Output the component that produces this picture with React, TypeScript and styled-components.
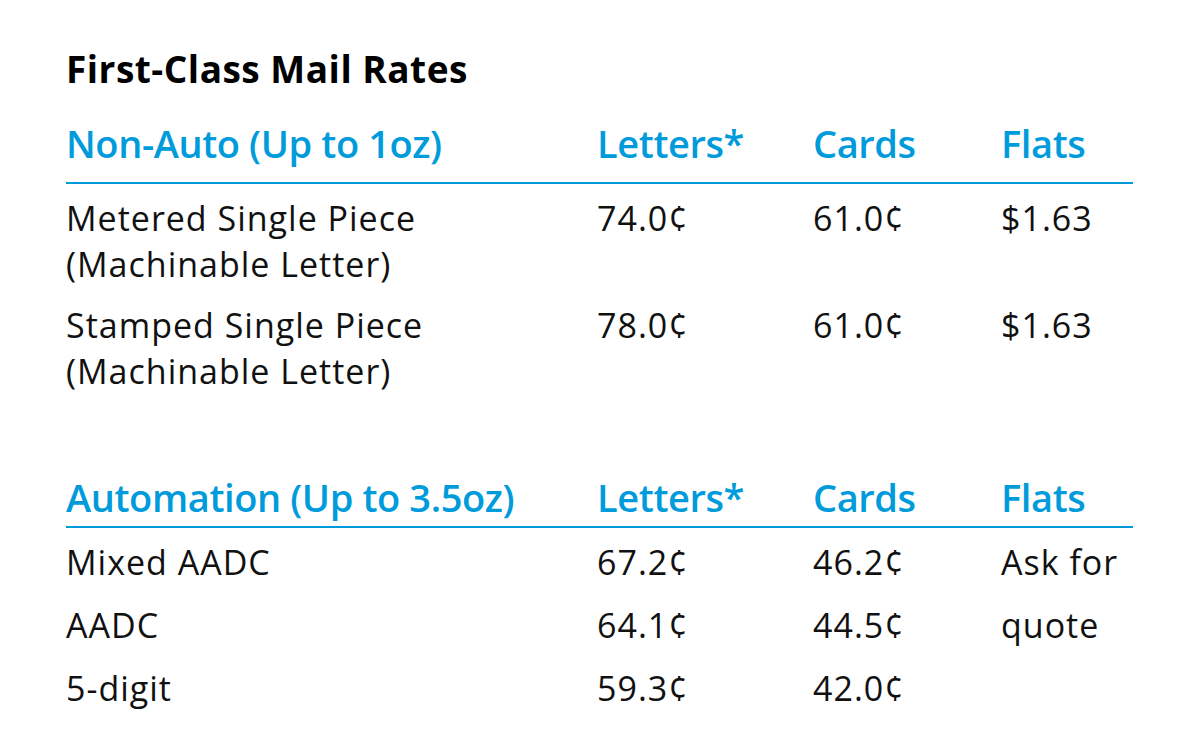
import React from "react";
import styled, { createGlobalStyle } from "styled-components";

const Global = createGlobalStyle`
  html, body { margin: 0; padding: 0; background: #ffffff; }
  body { font-family: "Open Sans", Lato, Arial, sans-serif; color: #111; }
`;

const BLUE = "#009bdb";

const Page = styled.div`
  padding: 48px 0 0 66px;
  width: 1067px;
`;

const Title = styled.h1`
  margin: 0 0 30px 0;
  font-size: 37px;
  line-height: 42px;
  font-weight: 700;
  letter-spacing: 0.5px;
  color: #000;
`;

const Table = styled.table<{ $gap?: number }>`
  width: 1067px;
  border-collapse: collapse;
  table-layout: fixed;
  margin-bottom: ${(p) => p.$gap ?? 0}px;
`;

const HeadCell = styled.th<{ $pad: number }>`
  text-align: left;
  font-size: 38px;
  line-height: 46px;
  font-weight: 600;
  letter-spacing: -0.4px;
  color: ${BLUE};
  padding: 0 0 ${(p) => p.$pad}px 0;
  border-bottom: 2px solid ${BLUE};
  white-space: nowrap;
`;

const Cell = styled.td<{ $lh: number; $pt: number; $pb: number }>`
  font-size: 34px;
  line-height: ${(p) => p.$lh}px;
  font-weight: 400;
  letter-spacing: 1px;
  color: #111;
  padding: ${(p) => p.$pt}px 0 ${(p) => p.$pb}px 0;
  vertical-align: top;
`;

const widths = [531, 216, 188, 132];

const Cols = () => (
  <colgroup>
    {widths.map((w, i) => (
      <col key={i} style={{ width: w }} />
    ))}
  </colgroup>
);

const Head = ({ first, pad }: { first: string; pad: number }) => (
  <thead>
    <tr>
      <HeadCell $pad={pad}>{first}</HeadCell>
      <HeadCell $pad={pad}>Letters*</HeadCell>
      <HeadCell $pad={pad}>Cards</HeadCell>
      <HeadCell $pad={pad}>Flats</HeadCell>
    </tr>
  </thead>
);

const nonAuto = [
  { name: ["Metered Single Piece", "(Machinable Letter)"], l: "74.0¢", c: "61.0¢", f: "$1.63" },
  { name: ["Stamped Single Piece", "(Machinable Letter)"], l: "78.0¢", c: "61.0¢", f: "$1.63" },
];

const auto = [
  { name: "Mixed AADC", l: "67.2¢", c: "46.2¢" },
  { name: "AADC", l: "64.1¢", c: "44.5¢" },
  { name: "5-digit", l: "59.3¢", c: "42.0¢" },
];

export default function App() {
  return (
    <>
      <Global />
      <Page>
        <Title>First-Class Mail Rates</Title>
        <Table $gap={76}>
          <Cols />
          <Head first="Non-Auto (Up to 1oz)" pad={16} />
          <tbody>
            {nonAuto.map((r, i) => (
              <tr key={i}>
                <Cell $lh={46} $pt={11} $pb={4}>
                  {r.name[0]}
                  <br />
                  {r.name[1]}
                </Cell>
                <Cell $lh={46} $pt={11} $pb={4}>{r.l}</Cell>
                <Cell $lh={46} $pt={11} $pb={4}>{r.c}</Cell>
                <Cell $lh={46} $pt={11} $pb={4}>{r.f}</Cell>
              </tr>
            ))}
          </tbody>
        </Table>
        <Table>
          <Cols />
          <Head first="Automation (Up to 3.5oz)" pad={6} />
          <tbody>
            {auto.map((r, i) => (
              <tr key={i}>
                <Cell $lh={63} $pt={i === 0 ? 3 : 0} $pb={0}>{r.name}</Cell>
                <Cell $lh={63} $pt={i === 0 ? 3 : 0} $pb={0}>{r.l}</Cell>
                <Cell $lh={63} $pt={i === 0 ? 3 : 0} $pb={0}>{r.c}</Cell>
                {i === 0 && (
                  <Cell $lh={63} $pt={3} $pb={0} rowSpan={3}>
                    Ask for quote
                  </Cell>
                )}
              </tr>
            ))}
          </tbody>
        </Table>
      </Page>
    </>
  );
}
